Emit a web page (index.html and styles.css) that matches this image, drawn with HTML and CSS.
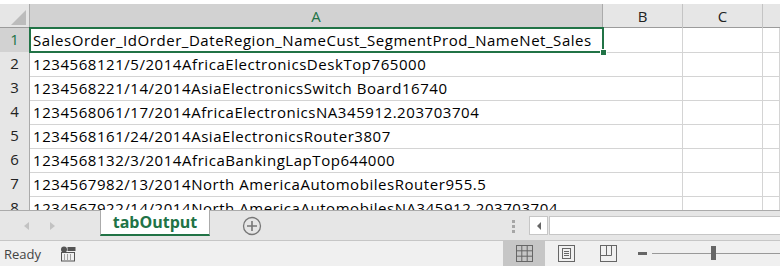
FILE: index.html
```html
<!DOCTYPE html>
<html lang="en">
<head>
  <meta charset="UTF-8">
  <title>Book1 - Excel</title>
  <link rel="stylesheet" href="styles.css">
</head>
<body>
  <!-- Grid -->
  <div class="sheet">
    <div class="top-strip"></div>
    <div class="row head-row">
      <div class="corner"><span class="corner-tri"></span></div>
      <div class="col-head active">A</div>
      <div class="col-head">B</div>
      <div class="col-head">C</div>
      <div class="col-head last"></div>
    </div>
    <div class="row">
      <div class="row-head active">1</div>
      <div class="cell selected">SalesOrder_IdOrder_DateRegion_NameCust_SegmentProd_NameNet_Sales<span class="handle"></span></div>
      <div class="cell"></div><div class="cell"></div><div class="cell"></div>
    </div>
    <div class="row">
      <div class="row-head">2</div>
      <div class="cell">1234568121/5/2014AfricaElectronicsDeskTop765000</div>
      <div class="cell"></div><div class="cell"></div><div class="cell"></div>
    </div>
    <div class="row">
      <div class="row-head">3</div>
      <div class="cell">1234568221/14/2014AsiaElectronicsSwitch Board16740</div>
      <div class="cell"></div><div class="cell"></div><div class="cell"></div>
    </div>
    <div class="row">
      <div class="row-head">4</div>
      <div class="cell">1234568061/17/2014AfricaElectronicsNA345912.203703704</div>
      <div class="cell"></div><div class="cell"></div><div class="cell"></div>
    </div>
    <div class="row">
      <div class="row-head">5</div>
      <div class="cell">1234568161/24/2014AsiaElectronicsRouter3807</div>
      <div class="cell"></div><div class="cell"></div><div class="cell"></div>
    </div>
    <div class="row">
      <div class="row-head">6</div>
      <div class="cell">1234568132/3/2014AfricaBankingLapTop644000</div>
      <div class="cell"></div><div class="cell"></div><div class="cell"></div>
    </div>
    <div class="row">
      <div class="row-head">7</div>
      <div class="cell">1234567982/13/2014North AmericaAutomobilesRouter955.5</div>
      <div class="cell"></div><div class="cell"></div><div class="cell"></div>
    </div>
    <div class="row">
      <div class="row-head">8</div>
      <div class="cell">1234567922/14/2014North AmericaAutomobilesNA345912.203703704</div>
      <div class="cell"></div><div class="cell"></div><div class="cell"></div>
    </div>
  </div>

  <!-- Sheet tabs -->
  <div class="tabbar">
    <div class="nav">
      <span class="arrow left"></span>
      <span class="arrow right"></span>
    </div>
    <div class="tab">tabOutput</div>
    <div class="add-sheet">
      <svg width="20" height="20" viewBox="0 0 20 20">
        <circle cx="10" cy="10" r="8.5" fill="none" stroke="#777" stroke-width="1.3"/>
        <path d="M10 5v10M5 10h10" stroke="#777" stroke-width="1.6"/>
      </svg>
    </div>
    <div class="spacer"></div>
    <div class="splitter"><i></i><i></i><i></i></div>
    <div class="hscroll">
      <div class="scroll-btn"><span class="tri"></span></div>
      <div class="scroll-track"></div>
    </div>
  </div>

  <!-- Status bar -->
  <div class="statusbar">
    <span class="ready">Ready</span>
    <svg class="macro" width="16" height="16" viewBox="0 0 16 16">
      <circle cx="4" cy="3.5" r="3" fill="#555"/>
      <rect x="7.5" y="1" width="8" height="4" fill="#555"/>
      <rect x="1.5" y="6.5" width="13" height="8.5" fill="none" stroke="#555"/>
      <path d="M4 9h1M7 9h1M10 9h1M4 11h1M7 11h1M10 11h1M4 13h1M7 13h1M10 13h1" stroke="#555"/>
    </svg>
    <div class="spacer"></div>
    <div class="view-btn active">
      <svg width="17" height="17" viewBox="0 0 17 17">
        <rect x="0.5" y="0.5" width="16" height="16" fill="none" stroke="#666"/>
        <path d="M5.8 0.5v16M11.2 0.5v16M0.5 5.8h16M0.5 11.2h16" stroke="#666"/>
      </svg>
    </div>
    <div class="view-btn">
      <svg width="17" height="17" viewBox="0 0 17 17">
        <rect x="0.5" y="0.5" width="16" height="16" fill="none" stroke="#666"/>
        <rect x="4.5" y="3.5" width="8" height="10" fill="none" stroke="#666"/>
        <path d="M6 6.5h5M6 8.5h5M6 10.5h5" stroke="#666"/>
      </svg>
    </div>
    <div class="view-btn">
      <svg width="17" height="17" viewBox="0 0 17 17">
        <rect x="0.5" y="0.5" width="16" height="16" fill="none" stroke="#666"/>
        <path d="M6.5 0.5v10M11.5 0.5v10M0.5 10.5h11" stroke="#666"/>
      </svg>
    </div>
    <div class="zoom">
      <span class="minus"></span>
      <div class="slider"><span class="thumb"></span></div>
    </div>
  </div>
</body>
</html>
```

FILE: styles.css
```css
/* General */
body {
  margin: 0;
  width: 780px;
  height: 266px;
  overflow: hidden;
  font-family: 'Open Sans', 'Noto Sans', sans-serif;
  background: #fff;
}

/* Grid */
.sheet {
  height: 210px;
  overflow: hidden;
}

.top-strip {
  height: 4px;
  background: #fff;
}

.row {
  display: grid;
  grid-template-columns: 30px 573px 80px 80px 1fr;
  height: 24px;
}

.head-row {
  height: 23px;
  background: #e6e6e6;
  border-bottom: 1px solid #9b9b9b;
}

.corner {
  position: relative;
  border-right: 1px solid #ababab;
}

.corner-tri {
  position: absolute;
  right: 3px;
  bottom: 3px;
  width: 0;
  height: 0;
  border-left: 15px solid transparent;
  border-bottom: 15px solid #bcbcbc;
}

.col-head {
  font-size: 15px;
  color: #222;
  text-align: center;
  line-height: 24px;
  border-right: 1px solid #c4c4c4;
}

.col-head.active {
  background: #d2d2d2;
  color: #217346;
  border-right-color: #ababab;
}

.col-head.last {
  border-right: none;
}

.row-head {
  background: #e6e6e6;
  border-right: 1px solid #ababab;
  border-bottom: 1px solid #c4c4c4;
  font-size: 15px;
  color: #222;
  text-align: center;
  line-height: 23px;
}

.row-head.active {
  background: #d2d2d2;
  color: #217346;
}

.cell {
  border-right: 1px solid #d4d4d4;
  border-bottom: 1px solid #d4d4d4;
  font-size: 15px;
  letter-spacing: 0.55px;
  color: #000;
  line-height: 24px;
  padding-left: 3px;
  white-space: nowrap;
  position: relative;
}

.row .cell:nth-child(2) {
  border-right: none;
}

/* Active cell frame */
.cell.selected::after {
  content: '';
  position: absolute;
  top: -1px;
  left: -1px;
  right: -1px;
  bottom: -1px;
  border: 2px solid #217346;
  z-index: 1;
}

.handle {
  position: absolute;
  right: -4px;
  bottom: -4px;
  width: 5px;
  height: 5px;
  background: #217346;
  border: 1px solid #fff;
  z-index: 2;
}

/* Sheet tabs */
.tabbar {
  height: 29px;
  background: #e6e6e6;
  border-top: 1px solid #ababab;
  display: flex;
  align-items: flex-start;
}

.nav {
  width: 100px;
  display: flex;
  align-items: center;
  height: 29px;
  padding-left: 24px;
  gap: 21px;
  box-sizing: border-box;
}

.arrow {
  width: 0;
  height: 0;
  border-top: 4px solid transparent;
  border-bottom: 4px solid transparent;
}

.arrow.left {
  border-right: 5px solid #c2c2c2;
}

.arrow.right {
  border-left: 5px solid #c2c2c2;
}

.tab {
  width: 108px;
  height: 24px;
  margin-top: -1px;
  background: #fff;
  border-left: 1px solid #ababab;
  border-right: 1px solid #ababab;
  border-bottom: 2px solid #217346;
  color: #217346;
  font-weight: bold;
  font-size: 16px;
  text-align: center;
  line-height: 24px;
}

.add-sheet {
  margin: 5px 0 0 32px;
  height: 20px;
}

.spacer {
  flex: 1;
}

.splitter {
  display: flex;
  flex-direction: column;
  gap: 2px;
  margin: 9px 14px 0 0;
}

.splitter i {
  display: block;
  width: 3px;
  height: 3px;
  background: #a6a6a6;
}

.hscroll {
  width: 251px;
  display: flex;
  margin-top: 5px;
  height: 19px;
}

.scroll-btn {
  width: 17px;
  height: 17px;
  background: #fff;
  border: 1px solid #c6c6c6;
  display: flex;
  align-items: center;
  justify-content: center;
}

.tri {
  width: 0;
  height: 0;
  border-top: 4px solid transparent;
  border-bottom: 4px solid transparent;
  border-right: 4px solid #666;
}

.scroll-track {
  flex: 1;
  height: 17px;
  margin-left: 1px;
  background: #fff;
  border: 1px solid #c6c6c6;
  border-right: none;
}

/* Status bar */
.statusbar {
  height: 26px;
  background: #f0f0f0;
  border-top: 1px solid #c6c6c6;
  box-sizing: border-box;
  display: flex;
  align-items: center;
}

.ready {
  font-size: 13px;
  color: #444;
  margin-left: 4px;
}

.macro {
  margin-left: 19px;
}

.view-btn {
  width: 42px;
  height: 25px;
  display: flex;
  align-items: center;
  justify-content: center;
}

.view-btn.active {
  background: #c6c6c6;
}

.zoom {
  display: flex;
  align-items: center;
  width: 142px;
  margin-left: 9px;
}

.minus {
  width: 9px;
  height: 3px;
  background: #666;
}

.slider {
  flex: 1;
  height: 1px;
  background: #999;
  margin-left: 5px;
  position: relative;
}

.thumb {
  position: absolute;
  left: 59px;
  top: -7px;
  width: 5px;
  height: 14px;
  background: #666;
}
```
